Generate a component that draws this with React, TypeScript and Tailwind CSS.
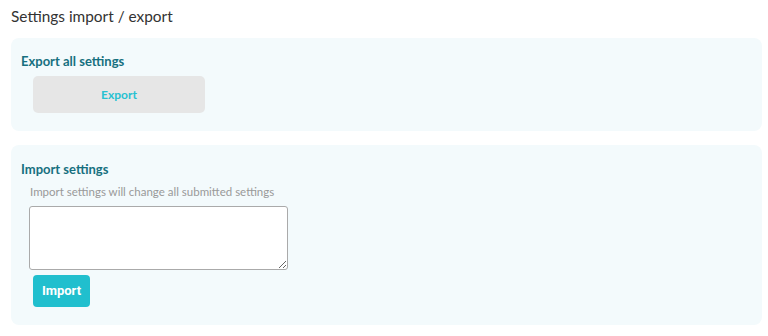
export default function App() {
  return (
    <div className="min-h-[336px] bg-white pl-[11px] pr-[6px] pt-[5px] font-['Lato',sans-serif]">
      <h1 className="text-[15.4px] leading-[22px] text-[#333]">Settings import / export</h1>

      <div className="mt-[11px] h-[93px] rounded-lg bg-[#f3fafc] px-[10px] pt-[14px]">
        <h2 className="text-[13px] font-bold leading-[18px] text-[#17707f]">Export all settings</h2>
        <button className="ml-3 mt-[6px] h-[37px] w-[172px] rounded-[5px] bg-[#e6e6e6] text-[12px] font-bold text-[#28c1d1]">
          Export
        </button>
      </div>

      <div className="mt-[14px] h-[180px] rounded-lg bg-[#f3fafc] px-[10px] pt-[15px]">
        <h2 className="text-[13px] font-bold leading-[18px] text-[#17707f]">Import settings</h2>
        <p className="ml-[9px] mt-[6px] text-[11.5px] leading-[16px] text-[#999]">
          Import settings will change all submitted settings
        </p>
        <textarea className="ml-2 mt-[6px] block h-[64px] w-[259px] rounded-[3px] border border-[#aaa] bg-white" />
        <button className="ml-3 mt-[5px] h-[32px] w-[57px] rounded-[4px] bg-[#20bfce] font-['Roboto',sans-serif] text-[13px] font-bold text-white">
          Import
        </button>
      </div>
    </div>
  );
}
